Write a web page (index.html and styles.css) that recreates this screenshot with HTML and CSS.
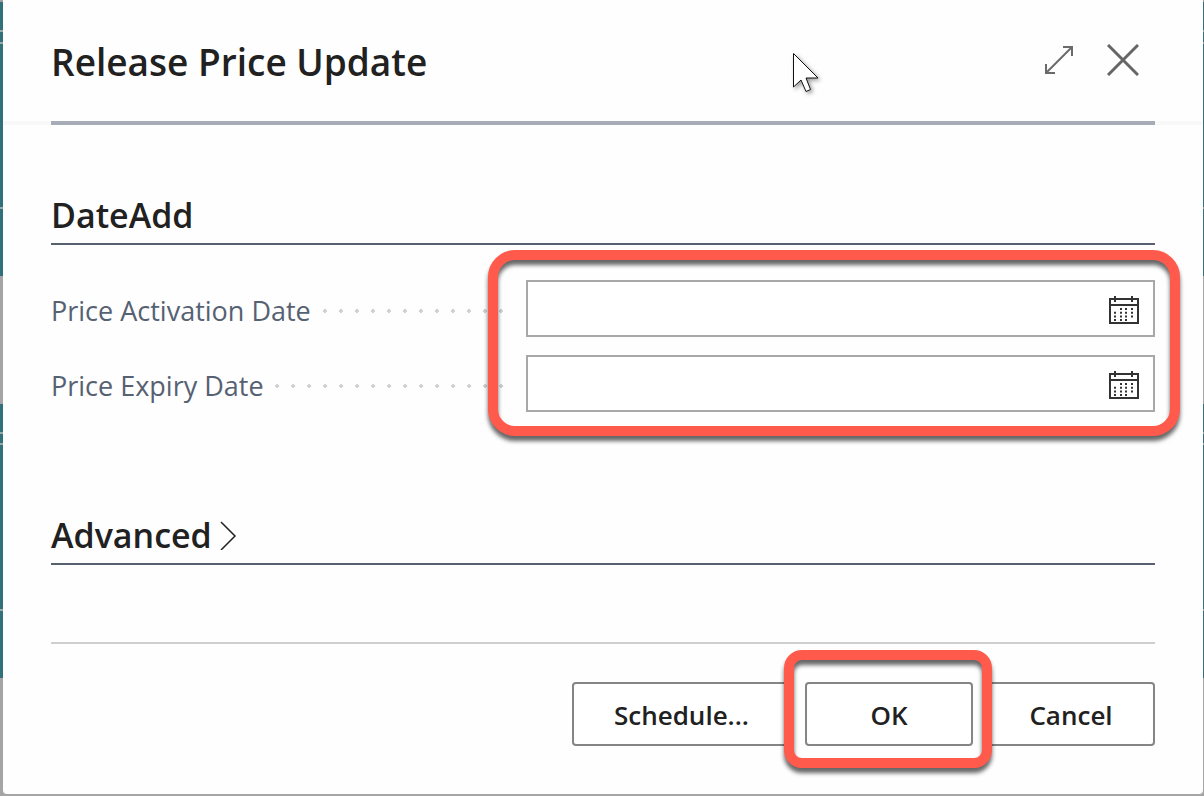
FILE: index.html
```html
<!DOCTYPE html>
<html lang="en">
<head>
    <meta charset="UTF-8">
    <meta name="viewport" content="width=device-width, initial-scale=1.0">
    <title>Release Price Update</title>
    <link rel="stylesheet" href="styles.css">
</head>
<body>
    <main class="dialog">
        <header class="dialog-header">
            <div class="title-bar">
                <h1>Release Price Update</h1>
                <button class="icon-button" type="button" aria-label="Expand">
                    <svg width="30" height="30" viewBox="0 0 30 30" fill="none" stroke="#6a6a6a" stroke-width="2">
                        <path d="M2 28L28 2M19 2H28V11M2 19V28H11"/>
                    </svg>
                </button>
                <button class="icon-button" type="button" aria-label="Close">
                    <svg width="32" height="32" viewBox="0 0 32 32" fill="none" stroke="#666" stroke-width="3">
                        <path d="M1 1L31 31M31 1L1 31"/>
                    </svg>
                </button>
            </div>
        </header>

        <section class="group">
            <h2>DateAdd</h2>
            <div class="fields">
                <div class="field">
                    <label for="activationDate">Price Activation Date</label>
                    <span class="dots"></span>
                    <div class="date-box">
                        <input type="text" id="activationDate">
                        <button class="icon-button" type="button" aria-label="Choose activation date">
                            <svg width="30" height="28" viewBox="0 0 30 28" fill="none" stroke="#333">
                                <path d="M1 3H29V27H1Z" stroke-width="2"/>
                                <path d="M1 9H29M6 0V6M23 0V6" stroke-width="2"/>
                                <path d="M12 12V25M17 12V25" stroke-width="2" stroke-dasharray="2 1.700"/>
                                <path d="M6 15.700V25M23 12V22" stroke-width="2" stroke-dasharray="2 1.700"/>
                            </svg>
                        </button>
                    </div>
                </div>
                <div class="field">
                    <label for="expiryDate">Price Expiry Date</label>
                    <span class="dots"></span>
                    <div class="date-box">
                        <input type="text" id="expiryDate">
                        <button class="icon-button" type="button" aria-label="Choose expiry date">
                            <svg width="30" height="28" viewBox="0 0 30 28" fill="none" stroke="#333">
                                <path d="M1 3H29V27H1Z" stroke-width="2"/>
                                <path d="M1 9H29M6 0V6M23 0V6" stroke-width="2"/>
                                <path d="M12 12V25M17 12V25" stroke-width="2" stroke-dasharray="2 1.700"/>
                                <path d="M6 15.700V25M23 12V22" stroke-width="2" stroke-dasharray="2 1.700"/>
                            </svg>
                        </button>
                    </div>
                </div>
                <span class="highlight highlight-fields"></span>
            </div>
        </section>

        <section class="group advanced">
            <h2>
                <button class="group-toggle" type="button" aria-expanded="false">Advanced
                    <svg width="17" height="30" viewBox="0 0 17 30" fill="none" stroke="#222" stroke-width="1.500">
                        <path d="M1 2L15 16L1 30"/>
                    </svg>
                </button>
            </h2>
        </section>

        <footer class="dialog-footer">
            <button class="action wide" type="button">Schedule...</button>
            <div class="marked">
                <button class="action" type="button">OK</button>
                <span class="highlight highlight-ok"></span>
            </div>
            <button class="action" type="button">Cancel</button>
        </footer>
    </main>

    <!-- mouse pointer -->
    <svg class="cursor" width="27" height="40" viewBox="0 0 27 40" fill="#fff" stroke="#111" stroke-width="1">
        <path d="M0.5 0.5V34L8 27L13 38.500L17.500 36.500L13 25H25Z"/>
    </svg>
</body>
</html>
```
FILE: styles.css
```css
* {
    box-sizing: border-box;
}

body {
    font-family: "Open Sans", "Segoe UI", sans-serif;
    margin: 0;
    min-height: 100vh;
    display: flex;
    padding: 0 1px 2px 3px;
    color: #212121;
    background: linear-gradient(#a0a0a0 2px,
        #30717a 2px, #30717a 30px, #9aa 30px, #9aa 32px,
        #30717a 32px, #30717a 42px, #9aa 42px, #9aa 44px,
        #30717a 44px, #30717a 207px, #9aa 207px, #9aa 209px,
        #30717a 209px, #30717a 276px, #a5a5a5 276px, #a5a5a5 404px,
        #30717a 404px, #30717a 432px, #9aa 432px, #9aa 434px,
        #30717a 434px, #30717a 443px, #9aa 443px, #9aa 445px,
        #30717a 445px, #30717a 609px, #9aa 609px, #9aa 611px,
        #30717a 611px, #30717a 678px, #a5a5a5 678px);
}

h1,
h2 {
    margin: 0;
    font-weight: 600;
}

button {
    font-family: inherit;
    color: inherit;
    cursor: pointer;
}

.dialog {
    flex: 1;
    background-color: #fefefe;
    border-radius: 0 0 4px 4px;
}

.dialog-header {
    padding: 0 48px;
    background: linear-gradient(#f8f8f9, #f8f8f9) bottom / 100% 4px no-repeat;
}

.title-bar {
    display: flex;
    align-items: center;
    gap: 33px;
    height: 125px;
    padding: 0 16px 2px 0;
    border-bottom: 4px solid #a6adb7;
}

.title-bar h1 {
    flex: 1;
    padding-top: 4px;
    font-size: 37px;
    line-height: 48px;
}

.icon-button {
    display: flex;
    padding: 0;
    border: none;
    background: none;
}

.group {
    margin: 0 48px;
    padding-top: 66px;
}

.group h2 {
    font-size: 34px;
    line-height: 48px;
    padding-bottom: 4px;
    border-bottom: 2px solid #56606e;
}

.fields {
    position: relative;
    display: grid;
    gap: 18px;
    padding-top: 35px;
}

.field {
    display: flex;
    align-items: center;
}

.field label {
    padding-top: 4px;
    font-size: 27px;
    line-height: 40px;
    color: #566172;
}

.dots {
    flex: 1;
    height: 4px;
    margin: 4px 17px 0 6px;
    background: radial-gradient(circle, #cfd1d6 2px, transparent 2px) right / 16px 4px repeat-x;
}

.date-box {
    display: flex;
    align-items: center;
    width: 57%;
    height: 57px;
    padding: 2px 14px 0 0;
    border: 2px solid #a8a8a8;
    background-color: #fff;
}

.date-box input {
    flex: 1;
    min-width: 0;
    height: 100%;
    padding: 0 14px;
    border: none;
    outline: none;
    background: none;
    font: inherit;
    font-size: 27px;
}

.advanced {
    padding-top: 99px;
}

.group-toggle {
    display: flex;
    align-items: center;
    gap: 8px;
    padding: 0;
    border: none;
    background: none;
    font: inherit;
}

.dialog-footer {
    display: flex;
    justify-content: flex-end;
    gap: 14px;
    margin: 77px 48px 0;
    padding: 38px 0 48px;
    border-top: 2px solid #cfcfcf;
}

.action {
    width: 168px;
    height: 64px;
    padding: 2px 0 0;
    border: 2px solid #858585;
    border-radius: 4px;
    background-color: #fff;
    font-size: 26px;
    font-weight: 600;
}

.wide {
    width: 219px;
}

.marked {
    position: relative;
}

/* red callout frames */
.highlight {
    position: absolute;
    border: 10px solid #ff5a4c;
    filter: drop-shadow(0 5px 2px rgba(0, 0, 0, 0.6));
    pointer-events: none;
}

.highlight-fields {
    top: 5px;
    right: -25px;
    bottom: -24px;
    width: calc(57% + 63px);
    border-radius: 27px;
}

.highlight-ok {
    top: -32px;
    right: -19px;
    bottom: -22px;
    left: -21px;
    border-radius: 18px;
}

.cursor {
    position: absolute;
    left: 793px;
    top: 53px;
    overflow: visible;
    filter: drop-shadow(2px 2px 2px rgba(0, 0, 0, 0.4));
}
```
